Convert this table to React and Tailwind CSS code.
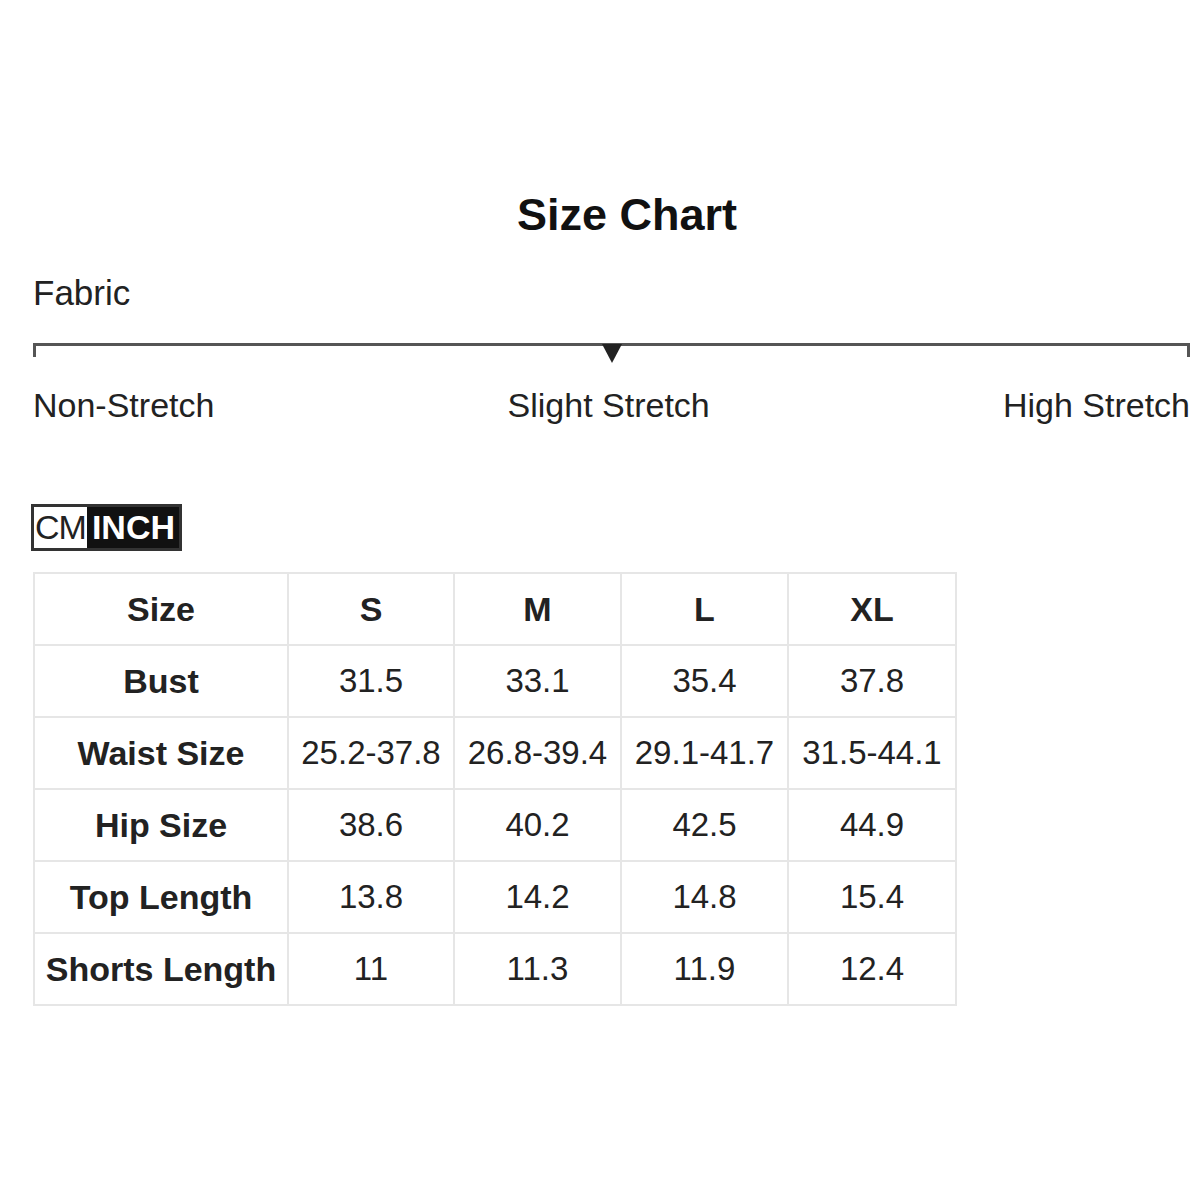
import React from 'react';

const sizes = ['S', 'M', 'L', 'XL'];

const rows = [
  { label: 'Bust', values: ['31.5', '33.1', '35.4', '37.8'] },
  { label: 'Waist Size', values: ['25.2-37.8', '26.8-39.4', '29.1-41.7', '31.5-44.1'] },
  { label: 'Hip Size', values: ['38.6', '40.2', '42.5', '44.9'] },
  { label: 'Top Length', values: ['13.8', '14.2', '14.8', '15.4'] },
  { label: 'Shorts Length', values: ['11', '11.3', '11.9', '12.4'] },
];

const StretchScale = () => (
  <div className="ml-[33px] w-[1157px]">
    {/* scale line with end ticks and marker */}
    <div className="relative h-[24px]">
      <div className="h-[3px] bg-[#555]" />
      <div className="absolute left-0 top-0 w-[3px] h-[14px] bg-[#555]" />
      <div className="absolute right-0 top-0 w-[3px] h-[14px] bg-[#555]" />
      <div className="absolute left-1/2 top-[1px] -translate-x-1/2 w-0 h-0 border-l-[10px] border-r-[10px] border-t-[19px] border-l-transparent border-r-transparent border-t-[#222]" />
    </div>
    <div className="mt-[18px] flex justify-between text-[34px] leading-[40px] text-[#222]">
      <span>Non-Stretch</span>
      <span>Slight Stretch</span>
      <span>High Stretch</span>
    </div>
  </div>
);

const UnitToggle = () => (
  <div className="ml-[31px] inline-flex border-[3px] border-[#333]">
    <span className="bg-white px-[1px] text-[34px] leading-[41px] tracking-[-1px] text-[#222]">CM</span>
    <span className="bg-[#111] pl-[5px] pr-[4px] text-[34px] leading-[41px] font-bold text-white">INCH</span>
  </div>
);

const SizeTable = () => (
  <table className="ml-[33px] mt-[21px] w-[922px] table-fixed border-collapse text-[#222]">
    <colgroup>
      <col className="w-[254px]" />
      <col className="w-[166px]" />
      <col className="w-[167px]" />
      <col className="w-[167px]" />
      <col className="w-[168px]" />
    </colgroup>
    <tbody>
      <tr className="h-[72px]">
        <td className="border-2 border-[#e6e6e6] text-center text-[34px] font-bold">Size</td>
        {sizes.map((s) => (
          <td key={s} className="border-2 border-[#e6e6e6] text-center text-[34px] font-bold">{s}</td>
        ))}
      </tr>
      {rows.map((row) => (
        <tr key={row.label} className="h-[72px]">
          <td className="border-2 border-[#e6e6e6] text-center text-[34px] font-bold whitespace-nowrap">{row.label}</td>
          {row.values.map((v, i) => (
            <td key={i} className="border-2 border-[#e6e6e6] text-center text-[33px] whitespace-nowrap">
              {v}
            </td>
          ))}
        </tr>
      ))}
    </tbody>
  </table>
);

export default function App() {
  return (
    <div className="w-[1200px] h-[1200px] bg-white overflow-hidden font-['Liberation_Sans',Arial,sans-serif]">
      <h1 className="pt-[191px] pl-[54px] text-center text-[45px] leading-[48px] font-bold text-[#111]">Size Chart</h1>
      <div className="ml-[33px] mt-[34px] text-[35px] leading-[40px] text-[#222]">Fabric</div>
      <div className="mt-[30px]">
        <StretchScale />
      </div>
      <div className="mt-[79px]">
        <UnitToggle />
      </div>
      <SizeTable />
    </div>
  );
}
